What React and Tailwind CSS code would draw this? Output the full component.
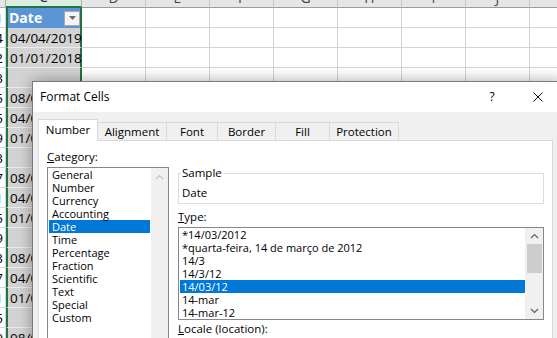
import React from "react";

function Chevron({ up = true, color = "#606060" }) {
  return (
    <svg width="9" height="6" viewBox="0 0 9 6">
      <path
        d={up ? "M1 5L4.5 1.5L8 5" : "M1 1L4.5 4.5L8 1"}
        fill="none"
        stroke={color}
        strokeWidth="1.2"
      />
    </svg>
  );
}

const rows = [
  { n: "34", v: "04/04/2019" },
  { n: "42", v: "01/01/2018" },
  { n: "43", v: "" },
  { n: "45", v: "08/08/2017" },
  { n: "55", v: "04/04/2019" },
  { n: "59", v: "01/01/2018" },
  { n: "63", v: "" },
  { n: "67", v: "08/08/2017" },
  { n: "71", v: "04/04/2019" },
  { n: "75", v: "01/01/2018" },
  { n: "79", v: "" },
  { n: "83", v: "08/08/2017" },
  { n: "87", v: "04/04/2019" },
  { n: "91", v: "01/01/2018" },
  { n: "95", v: "" },
  { n: "99", v: "08/08/2017" },
];

const cols = ["D", "E", "F", "G", "H", "I", "J", "K"];

const categories = [
  "General",
  "Number",
  "Currency",
  "Accounting",
  "Date",
  "Time",
  "Percentage",
  "Fraction",
  "Scientific",
  "Text",
  "Special",
  "Custom",
];

const types = [
  "*14/03/2012",
  "*quarta-feira, 14 de março de 2012",
  "14/3",
  "14/3/12",
  "14/03/12",
  "14-mar",
  "14-mar-12",
];

const tabs = [
  { t: "Alignment", w: "w-[69px]" },
  { t: "Font", w: "w-[51px]" },
  { t: "Border", w: "w-[58px]" },
  { t: "Fill", w: "w-[54px]" },
  { t: "Protection", w: "w-[69px]" },
];

export default function App() {
  return (
    <div className="relative w-[557px] h-[338px] overflow-hidden bg-white font-['Open_Sans','Noto_Sans',sans-serif]">
      {/* Spreadsheet */}
      <div className="-mt-[12px] -ml-[24px] grid grid-cols-[30px_76px_repeat(8,64px)] auto-rows-[20px] text-[13.5px] text-black">
        {/* column header row */}
        <div className="bg-[#e6e6e6] border-r border-b border-[#ababab]" />
        <div className="bg-[#d9ede0] border-b-2 border-b-[#217346] border-r border-r-[#ababab] flex items-center justify-center text-[#2b2b2b] text-[14px] leading-none">
          C
        </div>
        {cols.map((c) => (
          <div
            key={c}
            className="bg-[#e6e6e6] border-r border-r-[#c6c6c6] border-b border-b-[#9b9b9b] flex items-center justify-center text-[#444] text-[14px] leading-none"
          >
            {c}
          </div>
        ))}

        {/* table header row */}
        <div className="bg-white border-r border-b border-[#d4d4d4] flex items-end justify-end pr-[2px] leading-[18px]">
          1
        </div>
        <div className="bg-[#5b95d5] border-x-2 border-x-[#217346] flex items-center pl-[1px] pr-0">
          <span className="text-white font-bold text-[14px] leading-none">Date</span>
          <div className="ml-auto w-[16px] h-[15px] bg-[#f4f4f4] border border-[#a8a8a8] flex items-center justify-center">
            <svg width="7" height="4" viewBox="0 0 7 4">
              <path d="M0 0H7L3.5 4Z" fill="#6b6b6b" />
            </svg>
          </div>
        </div>
        {cols.map((c) => (
          <div key={c} className="border-r border-b border-[#d4d4d4]" />
        ))}

        {rows.map((r, i) => (
          <React.Fragment key={i}>
            <div className="bg-white border-r border-b border-[#d4d4d4] flex items-end justify-end pr-[2px] leading-[18px]">
              {r.n}
            </div>
            <div className="bg-[#d3d3d3] border-x-2 border-x-[#217346] border-b border-b-[#ececec] flex items-end pl-[2px] leading-[18px]">
              {r.v}
            </div>
            {cols.map((c) => (
              <div key={c} className="border-r border-b border-[#d4d4d4]" />
            ))}
          </React.Fragment>
        ))}
      </div>

      {/* Format Cells dialog */}
      <div className="absolute left-[32px] top-[81px] w-[530px] h-[290px] border border-[#7a7a7a] bg-[#f0f0f0] shadow-[0_0_14px_rgba(0,0,0,0.35)] flex flex-col text-[11.5px] text-black">
        <div className="h-[30px] shrink-0 bg-white flex items-center pl-[7px]">
          <span className="text-[12px]">Format Cells</span>
          <div className="ml-auto flex h-full">
            <div className="w-[46px] flex items-center justify-center text-[12px]">?</div>
            <div className="w-[46px] flex items-center justify-center">
              <svg width="10" height="10" viewBox="0 0 10 10">
                <path d="M0.5 0.5L9.5 9.5M9.5 0.5L0.5 9.5" stroke="#111" strokeWidth="1" />
              </svg>
            </div>
          </div>
        </div>

        <div className="pl-[5px] pt-[7px] flex flex-col">
          {/* tabs */}
          <div className="flex items-start h-[22px]">
            <div className="relative z-10 w-[60px] h-[22px] bg-white border-l border-r border-t border-[#d9d9d9] flex items-center justify-center pb-[1px]">
              Number
            </div>
            {tabs.map((t) => (
              <div
                key={t.t}
                className={`${t.w} mt-[3px] h-[18px] bg-[#f0f0f0] border-t border-r border-[#d9d9d9] flex items-center justify-center`}
              >
                {t.t}
              </div>
            ))}
          </div>

          {/* panel */}
          <div className="-mt-px w-[515px] h-[240px] bg-white border border-[#d9d9d9] pt-[9px] pl-[8px] flex gap-[9px]">
            {/* category column */}
            <div className="w-[122px] flex flex-col">
              <div className="leading-[14px] h-[14px]">
                <span className="underline">C</span>ategory:
              </div>
              <div className="mt-[3px] h-[200px] border border-[#828790] flex text-[11px]">
                <div className="flex-1 px-[1px]">
                  {categories.map((c) => (
                    <div
                      key={c}
                      className={`h-[13px] leading-[13px] pl-[3px] ${
                        c === "Date" ? "bg-[#0078d7] text-white" : ""
                      }`}
                    >
                      {c}
                    </div>
                  ))}
                </div>
                <div className="w-[17px] bg-[#f0f0f0] flex flex-col">
                  <div className="h-[17px] flex items-center justify-center">
                    <Chevron color="#c2c2c2" />
                  </div>
                </div>
              </div>
            </div>

            {/* right column */}
            <div className="w-[366px] pt-[16px] flex flex-col">
              <fieldset className="border border-[#dcdcdc] pl-[2px] pb-[3px]">
                <legend className="px-[1px] leading-[14px]">Sample</legend>
                <div className="mt-[6px] ml-[1px] leading-[14px]">Date</div>
              </fieldset>

              <div className="mt-[6px] leading-[14px] h-[14px]">
                <span className="underline">T</span>ype:
              </div>
              <div className="mt-[3px] h-[93px] border border-[#828790] flex text-[11px]">
                <div className="flex-1 pl-[1px]">
                  {types.map((t) => (
                    <div
                      key={t}
                      className={`h-[13px] leading-[13px] pl-[2px] whitespace-nowrap ${
                        t === "14/03/12" ? "bg-[#0078d7] text-white" : ""
                      }`}
                    >
                      {t}
                    </div>
                  ))}
                </div>
                <div className="w-[18px] bg-[#f0f0f0] flex flex-col">
                  <div className="h-[16px] flex items-center justify-center">
                    <Chevron color="#606060" />
                  </div>
                  <div className="ml-[2px] w-[15px] h-[29px] bg-[#cdcdcd]" />
                  <div className="flex-1" />
                  <div className="h-[17px] flex items-center justify-center">
                    <Chevron up={false} color="#606060" />
                  </div>
                </div>
              </div>

              <div className="mt-[2px] leading-[14px]">
                <span className="underline">L</span>ocale (location):
              </div>
            </div>
          </div>
        </div>
      </div>
    </div>
  );
}
